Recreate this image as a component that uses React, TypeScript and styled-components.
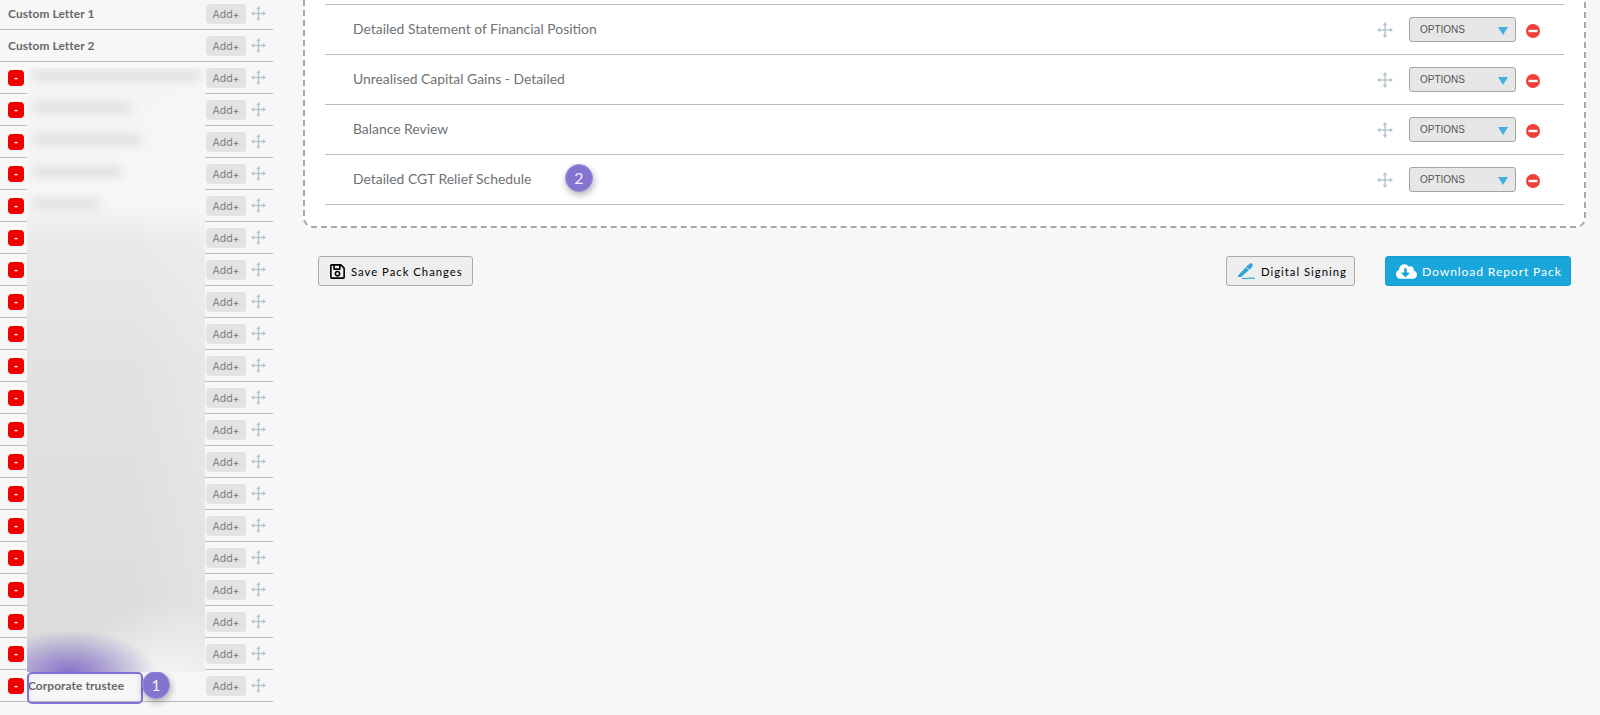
import React from "react";
import styled, { createGlobalStyle } from "styled-components";
import { FaRegSave, FaCloudDownloadAlt } from "react-icons/fa";

const Global = createGlobalStyle`
  html, body { margin: 0; padding: 0; height: 100%; overflow: hidden; background: #f7f7f7; }
  body { font-family: "Lato", "Liberation Sans", sans-serif; }
  #root { height: 100%; }
`;

const Page = styled.div`
  display: flex;
  height: 715px;
  overflow: hidden;
  background: #f7f7f7;
`;

const Sidebar = styled.aside`
  position: relative;
  flex: 0 0 273px;
  background: #f7f7f7;
  margin-top: -2px;
`;

const SideRow = styled.div`
  display: flex;
  align-items: center;
  height: 31px;
  border-bottom: 1px solid #bdbdbd;
  padding: 0 7px 0 8px;
`;

const RemoveSquare = styled.span`
  flex: 0 0 16px;
  height: 16px;
  margin-right: 4px;
  border-radius: 4px;
  background: #ee0000;
  color: #fff;
  font: 700 11px/15px "Liberation Sans", sans-serif;
  text-align: center;
`;

const SideLabel = styled.span`
  position: relative;
  flex: 1;
  font-size: 11.9px;
  font-weight: 700;
  letter-spacing: 0.1px;
  color: #66686b;
  white-space: nowrap;
`;

const AddButton = styled.span`
  flex: 0 0 40px;
  height: 20px;
  margin-right: 5px;
  border-radius: 4px;
  background: #e3e3e3;
  color: #7b7d80;
  font-family: "Inter", sans-serif;
  font-size: 10.5px;
  line-height: 21px;
  text-align: center;
`;

const Frame = styled.span`
  position: absolute;
  left: -1px;
  top: -6px;
  width: 116px;
  height: 32px;
  box-sizing: border-box;
  border: 2px solid #8273d2;
  border-radius: 5px;
  box-shadow: inset 0 0 6px rgba(130, 115, 210, 0.15);
`;

const Badge = styled.span<{ $left: number; $top: number }>`
  position: absolute;
  left: ${(p) => p.$left}px;
  top: ${(p) => p.$top}px;
  box-sizing: border-box;
  width: 28px;
  height: 28px;
  border-radius: 50%;
  background: #8574cf;
  border: 1px solid #9c8fdc;
  box-shadow: 1px 3px 7px rgba(0, 0, 0, 0.3);
  color: #f1effb;
  font-size: 16px;
  font-weight: 400;
  line-height: 26px;
  text-align: center;
`;

const Blur = styled.div`
  position: absolute;
  left: 27px;
  top: 70px;
  width: 178px;
  height: 604px;
  overflow: hidden;
  background:
    radial-gradient(ellipse 85px 42px at 24% 100%, rgba(118, 96, 196, 0.85), rgba(118, 96, 196, 0) 100%),
    radial-gradient(ellipse 95px 70px at 80% 100%, rgba(247, 247, 247, 0.85), rgba(247, 247, 247, 0) 100%),
    linear-gradient(to right, rgba(247, 247, 247, 0) 60%, rgba(247, 247, 247, 0.25) 100%),
    linear-gradient(to bottom, #f5f5f5 0, #f6f6f6 135px, #e9e9e9 175px, #e2e2e2 300px, #dedede 480px, #dbdbdb 604px);
`;

const Smudge = styled.div<{ $w: number; $top: number }>`
  position: absolute;
  left: 6px;
  top: ${(p) => p.$top}px;
  width: ${(p) => p.$w}px;
  height: 9px;
  background: #dcdcdc;
  filter: blur(5px);
`;

const Main = styled.main`
  flex: 1;
  padding: 0 14px 0 30px;
  min-width: 0;
`;

const Card = styled.section`
  margin-top: -20px;
  box-sizing: border-box;
  height: 248px;
  padding: 22px 20px 20px;
  background: #fff;
  border: 2px dashed #a8a8a8;
  border-radius: 10px;
`;

const ReportRow = styled.div`
  position: relative;
  display: flex;
  align-items: center;
  height: 49px;
  border-top: 1px solid #bdbdbd;
  padding-left: 28px;
  &:last-child {
    border-bottom: 1px solid #bdbdbd;
  }
`;

const ReportName = styled.span`
  flex: 1;
  padding-bottom: 2px;
  font-size: 13.9px;
  color: #6f7174;
`;

const OptionsSelect = styled.div`
  position: relative;
  box-sizing: border-box;
  width: 107px;
  height: 25px;
  margin: 0 10px 0 16px;
  padding-left: 10px;
  border: 1px solid #a4a4a4;
  border-radius: 3px;
  background: #e7e7e7;
  color: #555;
  font: 400 10px/24px "Liberation Sans", sans-serif;
  &::after {
    content: "";
    position: absolute;
    right: 7px;
    top: 9px;
    border-left: 5px solid transparent;
    border-right: 5px solid transparent;
    border-top: 8px solid #45afe0;
  }
`;

const RemoveDot = styled.svg`
  flex: 0 0 14px;
  margin: 2px 24px 0 0;
`;

const Actions = styled.div`
  display: flex;
  align-items: center;
  margin-top: 28px;
  padding: 0 15px;
`;

const Button = styled.button<{ $primary?: boolean }>`
  display: inline-flex;
  align-items: center;
  box-sizing: border-box;
  height: 30px;
  padding: 0 10px;
  border-radius: 3px;
  border: 1px solid ${(p) => (p.$primary ? "#1b9bcf" : "#aaa")};
  background: ${(p) => (p.$primary ? "#19a6db" : "#eee")};
  color: ${(p) => (p.$primary ? "#fff" : "#000")};
  font-family: inherit;
  font-size: ${(p) => (p.$primary ? 12.2 : 11.3)}px;
  font-weight: 400;
  letter-spacing: ${(p) => (p.$primary ? 0.85 : 1)}px;
  white-space: nowrap;
  svg { flex-shrink: 0; }
`;

const SaveButton = styled(Button)`
  width: 155px;
  gap: 5px;
  svg { font-size: 17px; }
`;

const SignButton = styled(Button)`
  width: 129px;
  margin-left: auto;
  gap: 5px;
`;

const DownloadButton = styled(Button)`
  width: 186px;
  margin-left: 30px;
  gap: 5px;
  svg { font-size: 21px; }
`;

const MoveIcon = ({ size = 15 }: { size?: number }) => (
  <svg width={size} height={size} viewBox="0 0 16 16" style={{ flex: `0 0 ${size}px` }}>
    <g fill="#b3c5ca">
      <rect x="7.3" y="2" width="1.4" height="12" />
      <rect x="2" y="7.3" width="12" height="1.4" />
      <path d="M8 0l2.3 3.2H5.7zM8 16l-2.3-3.2h4.6zM0 8l3.2-2.3v4.6zM16 8l-3.2 2.3V5.7z" />
    </g>
  </svg>
);

const PenIcon = () => (
  <svg width="19" height="18" viewBox="0 0 19 18">
    <path d="M1 13.5 10.5 3.5 13 1.5c1.4-1 3.6.9 2.6 2.6l-2 2.6-9.5 8.3H1z" fill="#2fa5d8" />
    <path d="M9.5 5.5 12.5 8.5" stroke="#eee" strokeWidth="1" />
    <path d="M5 16.8c2-1.5 3 .6 5-.3s3-.5 8 0" fill="none" stroke="#2fa5d8" strokeWidth="1.2" />
  </svg>
);

const letters = Array.from({ length: 20 }, (_, i) => i);
const reports = [
  "Detailed Statement of Financial Position",
  "Unrealised Capital Gains - Detailed",
  "Balance Review",
  "Detailed CGT Relief Schedule",
];

export default function App() {
  return (
    <Page>
      <Global />
      <Sidebar>
        {["Custom Letter 1", "Custom Letter 2"].map((name) => (
          <SideRow key={name}>
            <SideLabel>{name}</SideLabel>
            <AddButton>Add+</AddButton>
            <MoveIcon />
          </SideRow>
        ))}
        {letters.map((i) => (
          <SideRow key={i}>
            <RemoveSquare>-</RemoveSquare>
            <SideLabel>
              {i === 19 && (
                <>
                  Corporate trustee
                  <Frame />
                  <Badge $left={114} $top={-7}>1</Badge>
                </>
              )}
            </SideLabel>
            <AddButton>Add+</AddButton>
            <MoveIcon />
          </SideRow>
        ))}
        <Blur>
          <Smudge $top={3} $w={166} />
          <Smudge $top={35} $w={98} />
          <Smudge $top={67} $w={108} />
          <Smudge $top={99} $w={88} />
          <Smudge $top={131} $w={66} />
        </Blur>
      </Sidebar>
      <Main>
        <Card>
          {reports.map((name, i) => (
            <ReportRow key={name}>
              <ReportName>{name}</ReportName>
              {i === 3 && <Badge $left={240} $top={9}>2</Badge>}
              <MoveIcon size={16} />
              <OptionsSelect>OPTIONS</OptionsSelect>
              <RemoveDot width="14" height="14" viewBox="0 0 14 14">
                <circle cx="7" cy="7" r="7" fill="#ee3f3a" />
                <rect x="2.5" y="5.8" width="9" height="2.4" fill="#fff" />
              </RemoveDot>
            </ReportRow>
          ))}
        </Card>
        <Actions>
          <SaveButton><FaRegSave />Save Pack Changes</SaveButton>
          <SignButton><PenIcon />Digital Signing</SignButton>
          <DownloadButton $primary><FaCloudDownloadAlt />Download Report Pack</DownloadButton>
        </Actions>
      </Main>
    </Page>
  );
}
